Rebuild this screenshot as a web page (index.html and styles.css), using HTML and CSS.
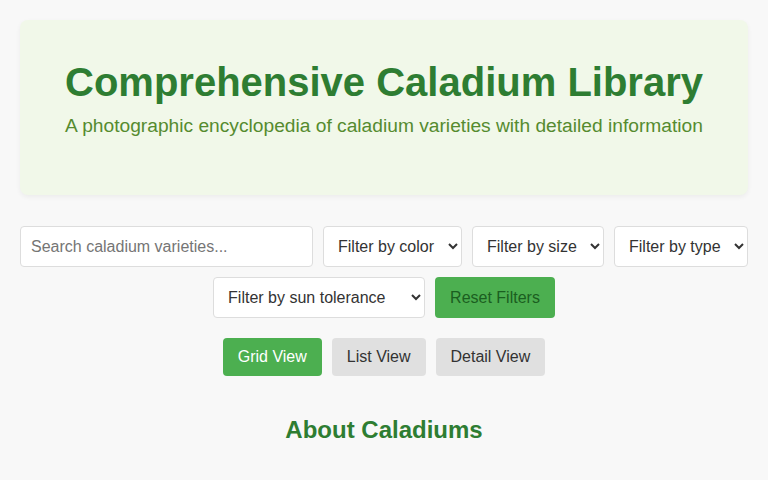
FILE: index.html
```html
<!DOCTYPE html>
<html lang="en">
<head>
<meta charset="utf-8">
<title>Comprehensive Caladium Library</title>
<link rel="stylesheet" href="styles.css">
</head>
<body>
<div class="container">
  <header class="site-header">
    <h1>Comprehensive Caladium Library</h1>
    <p class="tagline">A photographic encyclopedia of caladium varieties with detailed information</p>
  </header>

  <section class="controls">
    <div class="filters">
      <input class="search" type="text" placeholder="Search caladium varieties...">
      <select class="filter">
        <option>Filter by color</option>
        <option>Red</option>
        <option>Pink</option>
        <option>White</option>
        <option>Green</option>
      </select>
      <select class="filter">
        <option>Filter by size</option>
        <option>Dwarf</option>
        <option>Medium</option>
        <option>Large</option>
      </select>
      <select class="filter">
        <option>Filter by type</option>
        <option>Fancy Leaf</option>
        <option>Strap Leaf</option>
      </select>
      <select class="filter">
        <option>Filter by sun tolerance</option>
        <option>Full Sun</option>
        <option>Part Sun</option>
        <option>Shade</option>
        <option>Full Sun to Deep Shade</option>
      </select>
      <button class="reset-btn" type="button">Reset Filters</button>
    </div>

    <div class="view-toggle">
      <button class="view-btn active" type="button">Grid View</button>
      <button class="view-btn" type="button">List View</button>
      <button class="view-btn" type="button">Detail View</button>
    </div>
  </section>

  <section class="about">
    <h2>About Caladiums</h2>
  </section>
</div>
</body>
</html>
```
FILE: styles.css
```css
* {
  box-sizing: border-box;
}

body {
  margin: 0;
  background: #f8f8f8;
  color: #333;
  font-family: "Liberation Sans", Arial, sans-serif;
}

.container {
  padding: 20px;
}

.site-header {
  background: #f1f8e9;
  border-radius: 8px;
  box-shadow: 0 2px 5px rgba(0, 0, 0, 0.05);
  padding: 40px 20px 39px;
  text-align: center;
}

.site-header h1 {
  margin: 0 0 10px;
  font-size: 40px;
  color: #2e7d32;
}

.tagline {
  margin: 0 0 19px;
  font-size: 19.2px;
  color: #558b2f;
}

.controls {
  margin-top: 31px;
}

.filters {
  display: flex;
  flex-wrap: wrap;
  justify-content: center;
  gap: 10px;
}

.search,
.filter {
  height: 41px;
  padding: 10px;
  border: 1px solid #ddd;
  border-radius: 4px;
  background: #fff;
  color: #333;
  font-family: inherit;
  font-size: 16px;
}

.search {
  flex: 1;
  min-width: 250px;
}

.reset-btn,
.view-btn {
  padding: 10px 15px;
  border: none;
  border-radius: 4px;
  font-family: inherit;
  font-size: 16px;
  cursor: pointer;
}

.reset-btn {
  background: #4caf50;
  color: #1b5e20;
}

.view-toggle {
  display: flex;
  justify-content: center;
  gap: 10px;
  margin-top: 20px;
}

.view-btn {
  background: #e0e0e0;
  color: #333;
}

.view-btn.active {
  background: #4caf50;
  color: #fff;
}

.about {
  margin-top: 40px;
  text-align: center;
}

.about h2 {
  margin: 0;
  font-size: 24px;
  color: #2e7d32;
}
```
